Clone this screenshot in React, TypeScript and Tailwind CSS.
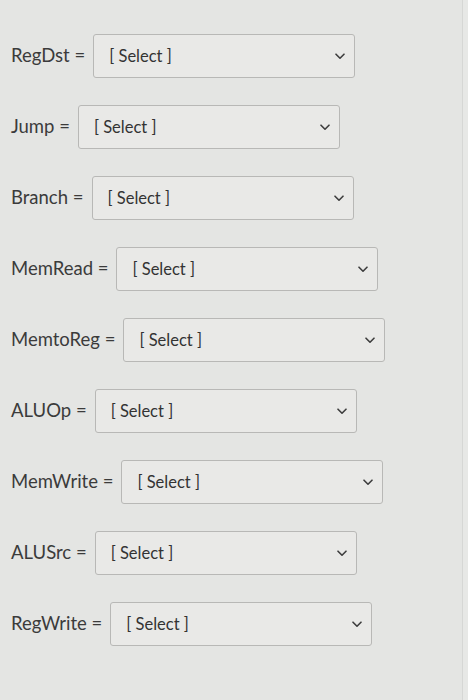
import React from "react";

const fields = [
  "RegDst",
  "Jump",
  "Branch",
  "MemRead",
  "MemtoReg",
  "ALUOp",
  "MemWrite",
  "ALUSrc",
  "RegWrite",
];

const Chevron = () => (
  <svg width="10" height="7" viewBox="0 0 10 7" fill="none" className="shrink-0">
    <path d="M1 1.2 L5 5.2 L9 1.2" stroke="#3d3d3d" strokeWidth="1.6" strokeLinecap="round" strokeLinejoin="round" />
  </svg>
);

const SelectRow = ({ label }: { label: string }) => (
  <div className="flex items-center gap-[8px]">
    <span className="text-[18.5px] text-[#3b3b3b] whitespace-nowrap">{label} =</span>
    <div className="flex items-center justify-between h-[44px] w-[262px] border border-[#b8b8b6] rounded-[3px] bg-[#e9e9e7] pl-[15px] pr-[9px]">
      <span className="text-[16.5px] text-[#333333]">[ Select ]</span>
      <Chevron />
    </div>
  </div>
);

export default function App() {
  return (
    <div
      className="w-[468px] h-[700px] bg-[#e4e5e3] overflow-hidden flex"
      style={{ fontFamily: "Lato, 'Open Sans', sans-serif" }}
    >
      <div className="flex-1 flex flex-col gap-[27px] pl-[11px] pt-[34px]">
        {fields.map((f) => (
          <SelectRow key={f} label={f} />
        ))}
      </div>
      <div className="w-[6px] h-full border-l border-[#d6d7d5] bg-[#e7e8e6]" />
    </div>
  );
}
